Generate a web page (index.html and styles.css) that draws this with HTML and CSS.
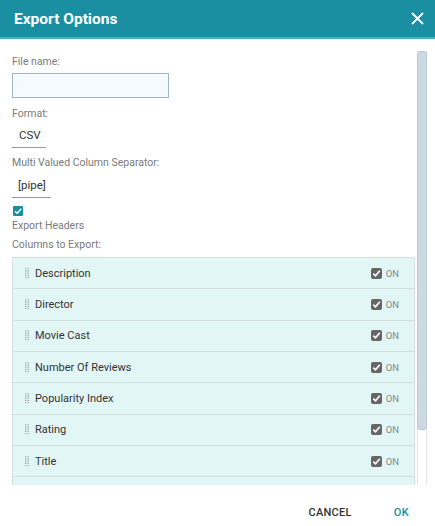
FILE: index.html
```html
<!DOCTYPE html>
<html>
<head>
<meta charset="utf-8">
<link rel="stylesheet" href="styles.css">
</head>
<body>
<div class="dialog">
  <header class="header">
    <h1 class="title">Export Options</h1>
    <button class="close" aria-label="Close">
      <svg width="13" height="13" viewBox="0 0 13 13"><path d="M1 1 L12 12 M12 1 L1 12" stroke="#fff" stroke-width="1.8" fill="none"/></svg>
    </button>
  </header>
  <div class="scroll-area">
    <div class="content">
      <label class="label">File name:</label>
      <input class="text-input" type="text">
      <label class="label gap">Format:</label>
      <div class="select csv">CSV</div>
      <label class="label gap2">Multi Valued Column Separator:</label>
      <div class="select pipe">[pipe]</div>
      <div class="check-wrap">
        <span class="teal-check">
          <svg width="10" height="10" viewBox="0 0 10 10"><path d="M2 5.2 L4.2 7.3 L8.2 2.8" stroke="#fff" stroke-width="1.4" fill="none"/></svg>
        </span>
      </div>
      <div class="label-plain">Export Headers</div>
      <div class="label-plain cols">Columns to Export:</div>
      <ul class="list">
        <li class="row"><svg class="grip" width="4" height="11" viewBox="0 0 4 11"><g fill="#8c8c8c"><circle cx="0.8" cy="0.8" r="0.65"/><circle cx="3.2" cy="0.8" r="0.65"/><circle cx="0.8" cy="3" r="0.65"/><circle cx="3.2" cy="3" r="0.65"/><circle cx="0.8" cy="5.2" r="0.65"/><circle cx="3.2" cy="5.2" r="0.65"/><circle cx="0.8" cy="7.4" r="0.65"/><circle cx="3.2" cy="7.4" r="0.65"/><circle cx="0.8" cy="9.6" r="0.65"/><circle cx="3.2" cy="9.6" r="0.65"/></g></svg><span class="name">Description</span><span class="on"><span class="box"><svg width="11" height="11" viewBox="0 0 11 11"><path d="M2.3 5.6 L4.5 7.8 L8.8 2.8" stroke="#fff" stroke-width="1.7" fill="none"/></svg></span>ON</span></li>
        <li class="row"><svg class="grip" width="4" height="11" viewBox="0 0 4 11"><g fill="#8c8c8c"><circle cx="0.8" cy="0.8" r="0.65"/><circle cx="3.2" cy="0.8" r="0.65"/><circle cx="0.8" cy="3" r="0.65"/><circle cx="3.2" cy="3" r="0.65"/><circle cx="0.8" cy="5.2" r="0.65"/><circle cx="3.2" cy="5.2" r="0.65"/><circle cx="0.8" cy="7.4" r="0.65"/><circle cx="3.2" cy="7.4" r="0.65"/><circle cx="0.8" cy="9.6" r="0.65"/><circle cx="3.2" cy="9.6" r="0.65"/></g></svg><span class="name">Director</span><span class="on"><span class="box"><svg width="11" height="11" viewBox="0 0 11 11"><path d="M2.3 5.6 L4.5 7.8 L8.8 2.8" stroke="#fff" stroke-width="1.7" fill="none"/></svg></span>ON</span></li>
        <li class="row"><svg class="grip" width="4" height="11" viewBox="0 0 4 11"><g fill="#8c8c8c"><circle cx="0.8" cy="0.8" r="0.65"/><circle cx="3.2" cy="0.8" r="0.65"/><circle cx="0.8" cy="3" r="0.65"/><circle cx="3.2" cy="3" r="0.65"/><circle cx="0.8" cy="5.2" r="0.65"/><circle cx="3.2" cy="5.2" r="0.65"/><circle cx="0.8" cy="7.4" r="0.65"/><circle cx="3.2" cy="7.4" r="0.65"/><circle cx="0.8" cy="9.6" r="0.65"/><circle cx="3.2" cy="9.6" r="0.65"/></g></svg><span class="name">Movie Cast</span><span class="on"><span class="box"><svg width="11" height="11" viewBox="0 0 11 11"><path d="M2.3 5.6 L4.5 7.8 L8.8 2.8" stroke="#fff" stroke-width="1.7" fill="none"/></svg></span>ON</span></li>
        <li class="row"><svg class="grip" width="4" height="11" viewBox="0 0 4 11"><g fill="#8c8c8c"><circle cx="0.8" cy="0.8" r="0.65"/><circle cx="3.2" cy="0.8" r="0.65"/><circle cx="0.8" cy="3" r="0.65"/><circle cx="3.2" cy="3" r="0.65"/><circle cx="0.8" cy="5.2" r="0.65"/><circle cx="3.2" cy="5.2" r="0.65"/><circle cx="0.8" cy="7.4" r="0.65"/><circle cx="3.2" cy="7.4" r="0.65"/><circle cx="0.8" cy="9.6" r="0.65"/><circle cx="3.2" cy="9.6" r="0.65"/></g></svg><span class="name">Number Of Reviews</span><span class="on"><span class="box"><svg width="11" height="11" viewBox="0 0 11 11"><path d="M2.3 5.6 L4.5 7.8 L8.8 2.8" stroke="#fff" stroke-width="1.7" fill="none"/></svg></span>ON</span></li>
        <li class="row"><svg class="grip" width="4" height="11" viewBox="0 0 4 11"><g fill="#8c8c8c"><circle cx="0.8" cy="0.8" r="0.65"/><circle cx="3.2" cy="0.8" r="0.65"/><circle cx="0.8" cy="3" r="0.65"/><circle cx="3.2" cy="3" r="0.65"/><circle cx="0.8" cy="5.2" r="0.65"/><circle cx="3.2" cy="5.2" r="0.65"/><circle cx="0.8" cy="7.4" r="0.65"/><circle cx="3.2" cy="7.4" r="0.65"/><circle cx="0.8" cy="9.6" r="0.65"/><circle cx="3.2" cy="9.6" r="0.65"/></g></svg><span class="name">Popularity Index</span><span class="on"><span class="box"><svg width="11" height="11" viewBox="0 0 11 11"><path d="M2.3 5.6 L4.5 7.8 L8.8 2.8" stroke="#fff" stroke-width="1.7" fill="none"/></svg></span>ON</span></li>
        <li class="row"><svg class="grip" width="4" height="11" viewBox="0 0 4 11"><g fill="#8c8c8c"><circle cx="0.8" cy="0.8" r="0.65"/><circle cx="3.2" cy="0.8" r="0.65"/><circle cx="0.8" cy="3" r="0.65"/><circle cx="3.2" cy="3" r="0.65"/><circle cx="0.8" cy="5.2" r="0.65"/><circle cx="3.2" cy="5.2" r="0.65"/><circle cx="0.8" cy="7.4" r="0.65"/><circle cx="3.2" cy="7.4" r="0.65"/><circle cx="0.8" cy="9.6" r="0.65"/><circle cx="3.2" cy="9.6" r="0.65"/></g></svg><span class="name">Rating</span><span class="on"><span class="box"><svg width="11" height="11" viewBox="0 0 11 11"><path d="M2.3 5.6 L4.5 7.8 L8.8 2.8" stroke="#fff" stroke-width="1.7" fill="none"/></svg></span>ON</span></li>
        <li class="row"><svg class="grip" width="4" height="11" viewBox="0 0 4 11"><g fill="#8c8c8c"><circle cx="0.8" cy="0.8" r="0.65"/><circle cx="3.2" cy="0.8" r="0.65"/><circle cx="0.8" cy="3" r="0.65"/><circle cx="3.2" cy="3" r="0.65"/><circle cx="0.8" cy="5.2" r="0.65"/><circle cx="3.2" cy="5.2" r="0.65"/><circle cx="0.8" cy="7.4" r="0.65"/><circle cx="3.2" cy="7.4" r="0.65"/><circle cx="0.8" cy="9.6" r="0.65"/><circle cx="3.2" cy="9.6" r="0.65"/></g></svg><span class="name">Title</span><span class="on"><span class="box"><svg width="11" height="11" viewBox="0 0 11 11"><path d="M2.3 5.6 L4.5 7.8 L8.8 2.8" stroke="#fff" stroke-width="1.7" fill="none"/></svg></span>ON</span></li>
        <li class="row"></li>
      </ul>
    </div>
    <div class="scrollbar"><div class="thumb"></div></div>
  </div>
  <footer class="footer">
    <button class="btn cancel">CANCEL</button>
    <button class="btn ok">OK</button>
  </footer>
</div>
</body>
</html>
```
FILE: styles.css
```css
* { box-sizing: border-box; }
html, body { margin: 0; padding: 0; }
body {
  width: 435px;
  height: 526px;
  overflow: hidden;
  background: #fff;
  font-family: Roboto, "Liberation Sans", sans-serif;
}
.dialog {
  display: flex;
  flex-direction: column;
  height: 526px;
}
.header {
  height: 39px;
  background: #1a8fa2;
  border-bottom: 2px solid #49b1c0;
  display: flex;
  align-items: center;
  justify-content: space-between;
  padding: 0 10px 0 14px;
  flex: none;
}
.title {
  margin: 0;
  color: #fff;
  font-size: 15.5px;
  font-weight: 700;
}
.close {
  background: none;
  border: 0;
  padding: 0;
  width: 16px;
  height: 16px;
  display: flex;
  align-items: center;
  justify-content: center;
}
.scroll-area {
  margin-top: 12px;
  height: 434px;
  display: flex;
  flex: none;
}
.content {
  flex: 1;
  overflow: hidden;
  padding: 4px 2px 0 12px;
  display: flex;
  flex-direction: column;
  align-items: flex-start;
}
.content > * { flex: none; }
.scrollbar {
  width: 10px;
  margin-right: 8px;
  border-left: 1px solid #e4e4e4;
  border-right: 1px solid #e4e4e4;
  flex: none;
}
.thumb {
  height: 379px;
  margin: 0 -1px;
  background: #cdd9e0;
  border: 1px solid #bccad3;
  border-radius: 3px;
}
.label, .label-plain {
  font-size: 10.5px;
  line-height: 13px;
  color: #7a7a7a;
}
.label.gap { margin-top: 9px; }
.label.gap2 { margin-top: 8px; }
.text-input {
  margin-top: 5px;
  width: 157px;
  height: 25px;
  border: 1px solid #9fb4c8;
  background: #f4faff;
  outline: none;
}
.select {
  font-size: 11.5px;
  color: #333;
  border-bottom: 1px solid #9a9a9a;
  height: 26px;
  line-height: 26px;
  padding-left: 7px;
  margin-top: 2px;
}
.select.csv { width: 34px; }
.select.pipe { width: 39px; padding-left: 6px; margin-top: 3px; }
.check-wrap {
  margin-top: 8px;
  margin-left: 1px;
  height: 10px;
}
.teal-check {
  display: block;
  width: 10px;
  height: 10px;
  background: #1a8fa2;
  border-radius: 1px;
}
.teal-check svg { display: block; }
.label-plain { margin-top: 3px; }
.label-plain.cols { margin-top: 6px; }
.list {
  list-style: none;
  margin: 6px 0 0 0;
  padding: 0;
  width: 403px;
  border: 1px solid #d6e2e2;
  border-bottom: 0;
}
.row {
  height: 31.33px;
  background: #e3f6f6;
  border-bottom: 1px solid #d2dede;
  display: flex;
  align-items: center;
  padding-left: 12px;
  padding-right: 15px;
}
.grip {
  flex: none;
  margin-right: 6px;
}
.name {
  font-size: 11px;
  color: #333;
  flex: 1;
}
.on {
  display: flex;
  align-items: center;
  font-size: 9.5px;
  color: #888;
}
.box {
  width: 11px;
  height: 11px;
  background: #666;
  border-radius: 2px;
  margin-right: 4px;
}
.box svg { display: block; }
.footer {
  flex: 1;
  display: flex;
  justify-content: flex-end;
  align-items: center;
  padding: 13px 26px 0 0;
}
.btn {
  background: none;
  border: 0;
  font-family: Roboto, "Liberation Sans", sans-serif;
  font-size: 11px;
  font-weight: 500;
  letter-spacing: 0.3px;
  padding: 0;
}
.cancel { color: #333; margin-right: 42px; }
.ok { color: #1a8fa2; }
```
